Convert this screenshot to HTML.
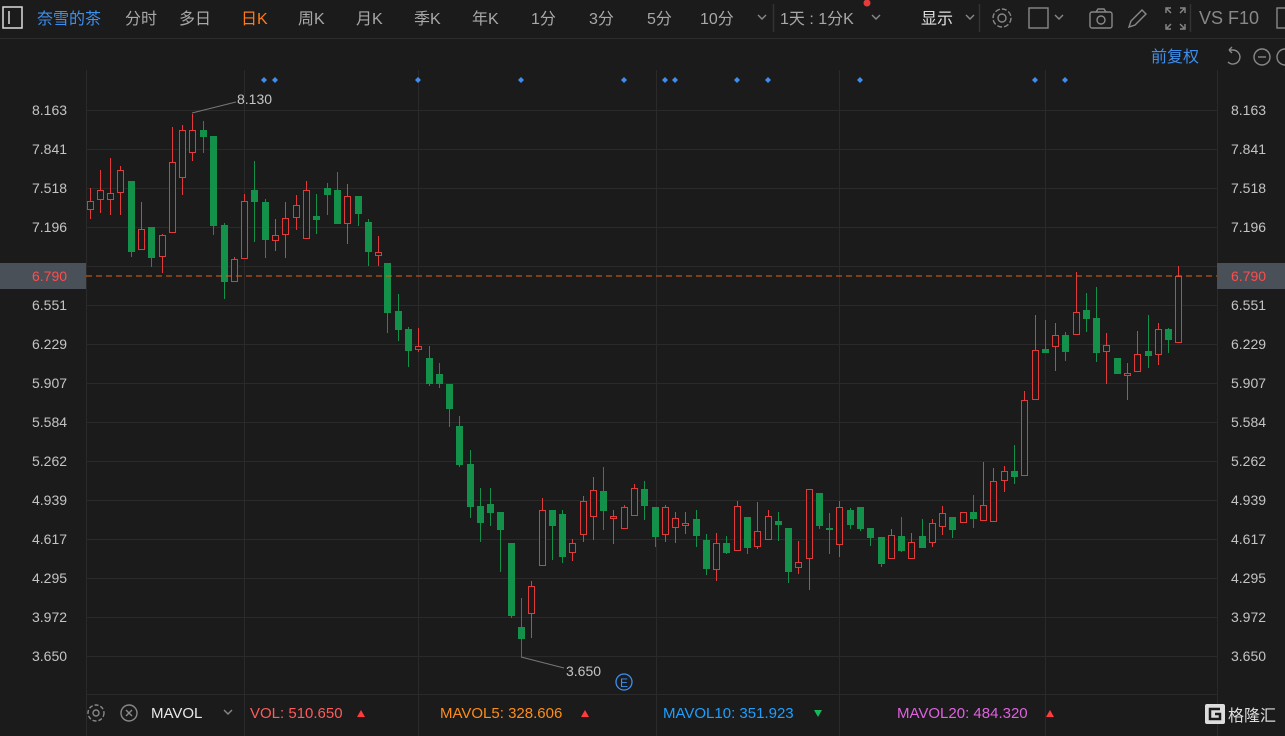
<!DOCTYPE html>
<html><head><meta charset="utf-8"><style>
body{margin:0;background:#1b1b1b;width:1285px;height:736px;overflow:hidden;font-family:"Liberation Sans","Noto Sans CJK SC",sans-serif}
svg{position:absolute;left:0;top:0}
</style></head><body>
<svg width="1285" height="736" viewBox="0 0 1285 736" font-family="Liberation Sans, Noto Sans CJK SC, sans-serif">
<rect width="1285" height="736" fill="#1b1b1b"/>
<line x1="0" y1="38.5" x2="1285" y2="38.5" stroke="#2c2c2c"/>
<!-- grid -->
<g stroke="#2a2a2a" stroke-width="1">
<line x1="86" y1="110.5" x2="1217" y2="110.5"/><line x1="86" y1="149.5" x2="1217" y2="149.5"/><line x1="86" y1="188.5" x2="1217" y2="188.5"/><line x1="86" y1="227.5" x2="1217" y2="227.5"/><line x1="86" y1="266.5" x2="1217" y2="266.5"/><line x1="86" y1="305.5" x2="1217" y2="305.5"/><line x1="86" y1="344.5" x2="1217" y2="344.5"/><line x1="86" y1="383.5" x2="1217" y2="383.5"/><line x1="86" y1="422.5" x2="1217" y2="422.5"/><line x1="86" y1="461.5" x2="1217" y2="461.5"/><line x1="86" y1="500.5" x2="1217" y2="500.5"/><line x1="86" y1="539.5" x2="1217" y2="539.5"/><line x1="86" y1="578.5" x2="1217" y2="578.5"/><line x1="86" y1="617.5" x2="1217" y2="617.5"/><line x1="86" y1="656.5" x2="1217" y2="656.5"/>
<line x1="86.5" y1="70" x2="86.5" y2="736"/><line x1="244.5" y1="70" x2="244.5" y2="736"/><line x1="418.5" y1="70" x2="418.5" y2="736"/><line x1="656.5" y1="70" x2="656.5" y2="736"/><line x1="839.5" y1="70" x2="839.5" y2="736"/><line x1="1045.5" y1="70" x2="1045.5" y2="736"/><line x1="1217.5" y1="70" x2="1217.5" y2="736"/>
<line x1="86" y1="694.5" x2="1217" y2="694.5"/>
</g>
<!-- axis labels -->
<g fill="#c4c4c4" font-size="14">
<text x="32" y="115">8.163</text><text x="32" y="154">7.841</text><text x="32" y="193">7.518</text><text x="32" y="232">7.196</text><text x="32" y="310">6.551</text><text x="32" y="349">6.229</text><text x="32" y="388">5.907</text><text x="32" y="427">5.584</text><text x="32" y="466">5.262</text><text x="32" y="505">4.939</text><text x="32" y="544">4.617</text><text x="32" y="583">4.295</text><text x="32" y="622">3.972</text><text x="32" y="661">3.650</text>
<text x="1231" y="115">8.163</text><text x="1231" y="154">7.841</text><text x="1231" y="193">7.518</text><text x="1231" y="232">7.196</text><text x="1231" y="310">6.551</text><text x="1231" y="349">6.229</text><text x="1231" y="388">5.907</text><text x="1231" y="427">5.584</text><text x="1231" y="466">5.262</text><text x="1231" y="505">4.939</text><text x="1231" y="544">4.617</text><text x="1231" y="583">4.295</text><text x="1231" y="622">3.972</text><text x="1231" y="661">3.650</text>
</g>
<!-- markers -->
<g fill="#3d8fef">
<path d="M264 77l3 3-3 3-3-3z"/><path d="M275 77l3 3-3 3-3-3z"/><path d="M418 77l3 3-3 3-3-3z"/><path d="M521 77l3 3-3 3-3-3z"/><path d="M624 77l3 3-3 3-3-3z"/><path d="M665 77l3 3-3 3-3-3z"/><path d="M675 77l3 3-3 3-3-3z"/><path d="M737 77l3 3-3 3-3-3z"/><path d="M768 77l3 3-3 3-3-3z"/><path d="M860 77l3 3-3 3-3-3z"/><path d="M1035 77l3 3-3 3-3-3z"/><path d="M1065 77l3 3-3 3-3-3z"/>
</g>
<!-- candles -->
<g id="c"></g>
<!-- annotations -->
<line x1="192" y1="113" x2="236" y2="102" stroke="#777"/>
<text x="237" y="104" fill="#c4c4c4" font-size="14">8.130</text>
<line x1="521" y1="657" x2="564" y2="668" stroke="#777"/>
<text x="566" y="676" fill="#c4c4c4" font-size="14">3.650</text>
<circle cx="624" cy="682" r="8" fill="none" stroke="#3d8fef" stroke-width="1.3"/>
<text x="624" y="687" fill="#3d8fef" font-size="12" text-anchor="middle">E</text>
<!-- price line -->
<line x1="86" y1="276" x2="1217" y2="276" stroke="#e0601a" stroke-dasharray="6,4"/>
<rect x="0" y="263" width="86" height="26" fill="#4a5058"/>
<text x="32" y="281" fill="#ff4d4d" font-size="14">6.790</text>
<rect x="1217" y="263" width="68" height="26" fill="#4a5058"/>
<text x="1231" y="281" fill="#ff4d4d" font-size="14">6.790</text>
<!-- top bar -->
<rect x="3" y="7" width="19" height="21" fill="none" stroke="#ddd" stroke-width="1.5"/><line x1="9" y1="11" x2="9" y2="24" stroke="#ddd" stroke-width="1.5"/>
<g font-size="16" fill="#a8a8a8">
<text x="37" y="24" fill="#3d8fef">奈雪的茶</text>
<text x="125" y="24">分时</text><text x="179" y="24">多日</text>
<text x="241" y="24" fill="#ff7a1a">日K</text>
<text x="298" y="24">周K</text><text x="356" y="24">月K</text><text x="414" y="24">季K</text><text x="472" y="24">年K</text>
<text x="531" y="24">1分</text><text x="589" y="24">3分</text><text x="647" y="24">5分</text><text x="700" y="24">10分</text>
<text x="780" y="24">1天 : 1分K</text>
<text x="921" y="24" fill="#e0e0e0">显示</text>
<text x="1199" y="24" fill="#888" font-size="18">VS F10</text>
</g>
<g fill="none" stroke="#888" stroke-width="1.4">
<path d="M758 15l4 4 4-4"/><path d="M872 15l4 4 4-4"/><path d="M966 15l4 4 4-4"/><path d="M1055 15l4 4 4-4"/>
<line x1="773.5" y1="4" x2="773.5" y2="32" stroke="#333"/><line x1="979.5" y1="4" x2="979.5" y2="32" stroke="#333"/><line x1="1190.5" y1="4" x2="1190.5" y2="32" stroke="#333"/>
<circle cx="1002" cy="18" r="4"/><circle cx="1002" cy="18" r="9" stroke-dasharray="5,2"/>
<rect x="1029" y="8" width="19" height="20"/>
<rect x="1090" y="12" width="22" height="16" rx="2"/><circle cx="1101" cy="20" r="4"/><path d="M1096 12l2-3h6l2 3"/>
<path d="M1129 27l2-6 11-11 4 4-11 11z"/>
<path d="M1166 13v-5h5M1180 8h5v5M1185 24v5h-5M1171 29h-5v-5M1167 9l4 4M1184 9l-4 4M1184 28l-4-4M1167 28l4-4"/>
<rect x="1277" y="8" width="12" height="20"/>
</g>
<circle cx="867" cy="3" r="3.5" fill="#e63b3b"/>
<text x="1151" y="62" fill="#3d8fef" font-size="16">前复权</text>
<g fill="none" stroke="#888" stroke-width="1.4">
<path d="M1229 50h4a7 7 0 1 1 -5 12"/><path d="M1229 50l3 -3M1229 50l3 3"/>
<circle cx="1262" cy="57" r="8"/><line x1="1258" y1="57" x2="1266" y2="57"/>
<circle cx="1285" cy="57" r="8"/>
</g>
<!-- bottom bar -->
<g fill="none" stroke="#888" stroke-width="1.4">
<circle cx="96" cy="713" r="3"/><circle cx="96" cy="713" r="8" stroke-dasharray="4,2"/>
<circle cx="129" cy="713" r="8"/><path d="M126 710l6 6M132 710l-6 6"/>
<path d="M224 710l4 4 4-4"/>
</g>
<g font-size="15">
<text x="151" y="718" fill="#e8e8e8">MAVOL</text>
<text x="250" y="718" fill="#ff5a5a">VOL: 510.650</text>
<text x="440" y="718" fill="#ff8c1a">MAVOL5: 328.606</text>
<text x="663" y="718" fill="#1e9fff">MAVOL10: 351.923</text>
<text x="897" y="718" fill="#e060e0">MAVOL20: 484.320</text>
</g>
<path d="M357 717l4-7 4 7z" fill="#ff3b3b"/><path d="M581 717l4-7 4 7z" fill="#ff3b3b"/><path d="M814 710l4 7 4-7z" fill="#17b85a"/><path d="M1046 717l4-7 4 7z" fill="#ff3b3b"/>
<rect x="1205" y="704" width="20" height="20" rx="2" fill="#ddd"/><path d="M1220 709h-10v10h10v-5h-5" fill="none" stroke="#1b1b1b" stroke-width="2.5"/>
<text x="1228" y="721" fill="#ddd" font-size="16">格隆汇</text>
<g id="cs">
</g>
</svg>
<svg width="1285" height="736" style="position:absolute;left:0;top:0;z-index:-1"></svg>
<script>
var d=[[90,201,210,188,219,1],[100,190,200,170,213,1],[110,193,200,158,215,1],[120,170,193,166,215,1],[131,181,252,181,257,0],[141,229,250,202,250,1],[151,227,258,227,267,0],[162,235,257,234,273,1],[172,162,233,127,233,1],[182,130,178,125,195,1],[192,130,153,114,161,1],[203,130,137,121,153,0],[213,136,226,136,235,0],[224,225,282,223,299,0],[234,259,282,257,282,1],[244,201,259,194,259,1],[254,190,202,161,242,0],[265,202,240,199,258,0],[275,235,241,219,251,1],[285,218,235,202,258,1],[296,205,218,195,230,1],[306,190,239,181,239,1],[316,216,220,194,234,0],[327,188,195,183,215,0],[337,190,224,172,224,0],[347,196,224,184,244,1],[358,196,214,196,226,0],[368,222,252,219,266,0],[378,252,256,236,266,1],[387,263,313,263,333,0],[398,311,330,294,341,0],[408,329,351,327,367,0],[418,346,350,328,352,1],[429,358,384,346,386,0],[439,374,384,363,388,0],[449,384,409,384,427,0],[459,426,465,416,467,0],[470,464,507,450,518,0],[480,506,523,488,542,0],[490,504,513,488,526,0],[500,512,530,512,572,0],[511,543,616,543,618,0],[521,627,639,598,657,0],[531,586,614,581,638,1],[542,510,566,498,566,1],[552,510,526,510,560,0],[562,514,557,510,563,0],[572,543,553,539,561,1],[583,501,535,496,542,1],[593,490,517,477,540,1],[603,491,511,467,530,0],[613,516,519,510,544,1],[624,507,529,505,529,1],[634,488,516,484,516,1],[644,489,506,481,520,0],[655,507,537,507,547,0],[665,507,535,505,542,1],[675,518,528,512,543,1],[685,523,526,512,534,1],[696,519,536,510,547,0],[706,540,569,534,575,0],[716,543,570,533,581,1],[726,543,553,536,554,0],[737,506,551,501,551,1],[747,517,548,517,554,0],[757,531,547,502,549,1],[768,516,540,510,540,1],[778,521,525,512,541,0],[788,528,572,528,583,0],[798,562,568,541,574,1],[809,489,559,489,590,1],[819,493,526,493,529,0],[829,528,529,513,554,0],[839,507,545,501,557,1],[850,510,525,508,529,0],[860,507,529,507,531,0],[870,528,538,528,546,0],[881,537,564,537,567,0],[891,535,559,529,559,1],[901,536,551,517,552,0],[911,542,559,533,559,1],[922,536,548,519,548,0],[932,523,543,519,547,1],[942,513,527,506,535,1],[952,517,530,517,538,0],[963,512,523,512,523,1],[973,512,519,495,528,0],[983,505,521,462,521,1],[993,481,522,468,522,1],[1004,471,481,466,492,1],[1014,471,477,445,484,0],[1024,400,476,391,476,1],[1035,350,400,315,400,1],[1045,349,353,320,353,0],[1055,335,347,323,371,1],[1065,335,352,332,361,0],[1076,312,335,272,335,1],[1086,310,319,293,332,0],[1096,318,353,287,362,0],[1106,345,352,333,384,1],[1117,358,374,358,374,0],[1127,373,376,363,400,1],[1137,354,372,331,372,1],[1148,351,356,315,368,0],[1158,329,355,323,365,1],[1168,329,340,328,353,0],[1178,276,343,266,343,1]];
var s='';d.forEach(function(c){var x=c[0],col=c[5]?'#e03a3a':'#13904a';s+='<line x1="'+(x+.5)+'" y1="'+c[3]+'" x2="'+(x+.5)+'" y2="'+c[4]+'" stroke="'+col+'"/>';if(c[5])s+='<rect x="'+(x-2.5)+'" y="'+(c[1]+.5)+'" width="6" height="'+Math.max(c[2]-c[1]-1,1)+'" fill="#1b1b1b" stroke="'+col+'"/>';else s+='<rect x="'+(x-3)+'" y="'+c[1]+'" width="7" height="'+Math.max(c[2]-c[1],2)+'" fill="'+col+'"/>';});
document.getElementById('c').innerHTML=s;
</script>
</body></html>
